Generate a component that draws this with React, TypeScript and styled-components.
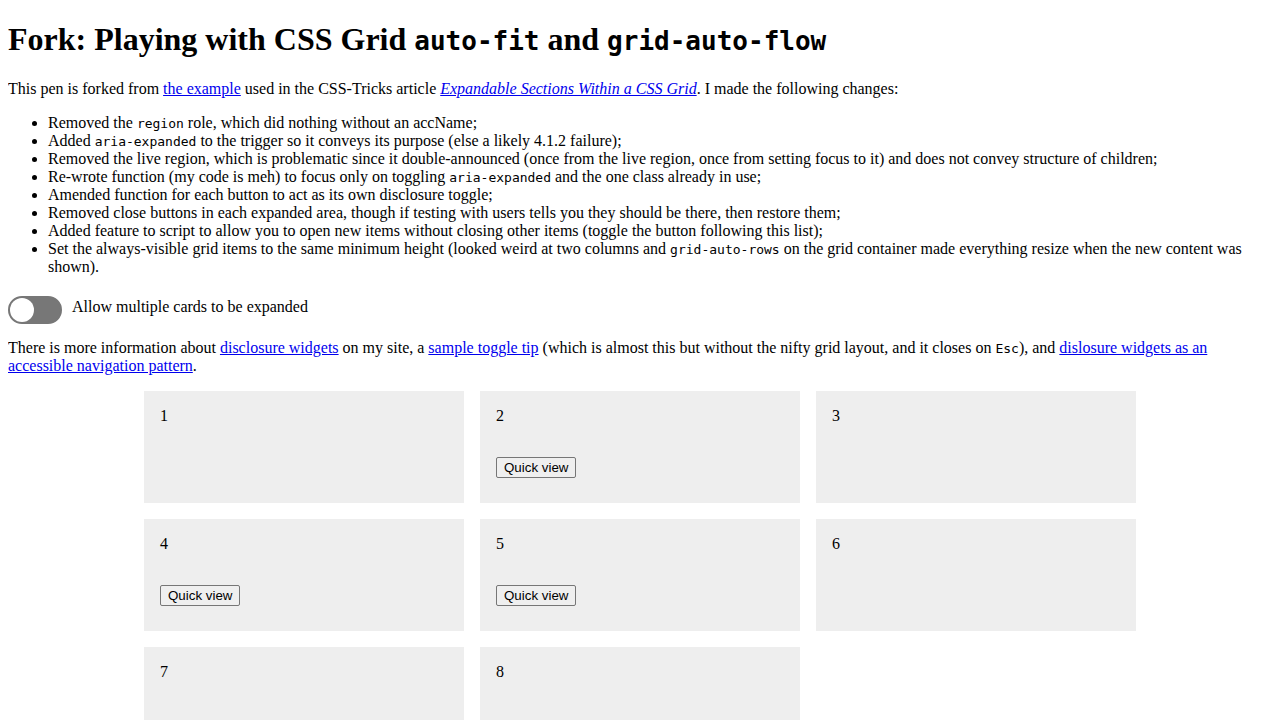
import React, { useState } from "react";
import styled, { createGlobalStyle } from "styled-components";

const GlobalStyle = createGlobalStyle`
  body {
    margin: 0 8px 8px;
    font-family: "Liberation Serif", "Times New Roman", serif;
    font-size: 16px;
    color: #000;
    background: #fff;
  }
`;

const Title = styled.h1`
  font-size: 32px;
  font-weight: bold;
  margin: 21.44px 0;

  code {
    font-size: 26px;
  }
`;

const Code = styled.code`
  font-family: "DejaVu Sans Mono", monospace;
  font-size: 13px;
`;

const Paragraph = styled.p<{ $top?: number }>`
  margin: ${(p) => (p.$top !== undefined ? `${p.$top}px` : "16px")} 0 16px;
  line-height: normal;
`;

const Link = styled.a<{ $italic?: boolean }>`
  color: #0000ee;
  text-decoration: underline;
  font-style: ${(p) => (p.$italic ? "italic" : "normal")};
`;

const ChangeList = styled.ul`
  margin: 16px 0;
  padding-left: 40px;
`;

// toggle row for the "multiple cards" setting
const ToggleRow = styled.div`
  display: flex;
  align-items: flex-start;
  gap: 10px;
  margin-top: 20px;
  height: 28px;
`;

const Switch = styled.button<{ $on: boolean }>`
  position: relative;
  width: 54px;
  height: 28px;
  padding: 0;
  border: 2px solid #777;
  border-radius: 14px;
  background: ${(p) => (p.$on ? "#2a7d2a" : "#777")};
  cursor: pointer;

  &::after {
    content: "";
    position: absolute;
    top: 0;
    left: ${(p) => (p.$on ? "26px" : "0")};
    width: 24px;
    height: 24px;
    border-radius: 50%;
    background: #fff;
  }
`;

const ToggleLabel = styled.span`
  padding-top: 1px;
  line-height: 20px;
`;

const Grid = styled.div`
  display: grid;
  grid-template-columns: repeat(auto-fit, 320px);
  justify-content: center;
  gap: 16px;
  margin-top: 16px;
`;

const Card = styled.div`
  background: #eee;
  min-height: 112px;
  padding: 16px;
  box-sizing: border-box;
`;

const CardNumber = styled.div`
  line-height: 18px;
`;

const QuickView = styled.button`
  margin-top: 32px;
  font-family: "Liberation Sans", Arial, sans-serif;
  font-size: 13.33px;
  padding: 1px 7px;
  border: 1px solid #767676;
  border-radius: 2px;
  background: #efefef;
  color: #000;
  height: 21px;
`;

const cards = [
  { n: 1, quick: false },
  { n: 2, quick: true },
  { n: 3, quick: false },
  { n: 4, quick: true },
  { n: 5, quick: true },
  { n: 6, quick: false },
  { n: 7, quick: false },
  { n: 8, quick: false },
];

export default function App() {
  const [multiple, setMultiple] = useState(false);

  return (
    <>
      <GlobalStyle />
      <Title>
        Fork: Playing with CSS Grid <Code>auto-fit</Code> and <Code>grid-auto-flow</Code>
      </Title>
      <Paragraph>
        This pen is forked from <Link href="#">the example</Link> used in the CSS-Tricks article{" "}
        <Link href="#" $italic>
          Expandable Sections Within a CSS Grid
        </Link>
        . I made the following changes:
      </Paragraph>
      <ChangeList>
        <li>
          Removed the <Code>region</Code> role, which did nothing without an accName;
        </li>
        <li>
          Added <Code>aria-expanded</Code> to the trigger so it conveys its purpose (else a likely 4.1.2 failure);
        </li>
        <li>
          Removed the live region, which is problematic since it double-announced (once from the live region, once
          from setting focus to it) and does not convey structure of children;
        </li>
        <li>
          Re-wrote function (my code is meh) to focus only on toggling <Code>aria-expanded</Code> and the one class
          already in use;
        </li>
        <li>Amended function for each button to act as its own disclosure toggle;</li>
        <li>
          Removed close buttons in each expanded area, though if testing with users tells you they should be there,
          then restore them;
        </li>
        <li>
          Added feature to script to allow you to open new items without closing other items (toggle the button
          following this list);
        </li>
        <li>
          Set the always-visible grid items to the same minimum height (looked weird at two columns and{" "}
          <Code>grid-auto-rows</Code> on the grid container made everything resize when the new content was shown).
        </li>
      </ChangeList>
      <ToggleRow>
        <Switch
          role="switch"
          aria-checked={multiple}
          aria-label="Allow multiple cards to be expanded"
          $on={multiple}
          onClick={() => setMultiple(!multiple)}
        />
        <ToggleLabel>Allow multiple cards to be expanded</ToggleLabel>
      </ToggleRow>
      <Paragraph $top={15}>
        There is more information about <Link href="#">disclosure widgets</Link> on my site, a{" "}
        <Link href="#">sample toggle tip</Link> (which is almost this but without the nifty grid layout, and it
        closes on <Code>Esc</Code>), and <Link href="#">dislosure widgets as an accessible navigation pattern</Link>.
      </Paragraph>
      <Grid>
        {cards.map((c) => (
          <Card key={c.n}>
            <CardNumber>{c.n}</CardNumber>
            {c.quick && <QuickView aria-expanded="false">Quick view</QuickView>}
          </Card>
        ))}
      </Grid>
    </>
  );
}
